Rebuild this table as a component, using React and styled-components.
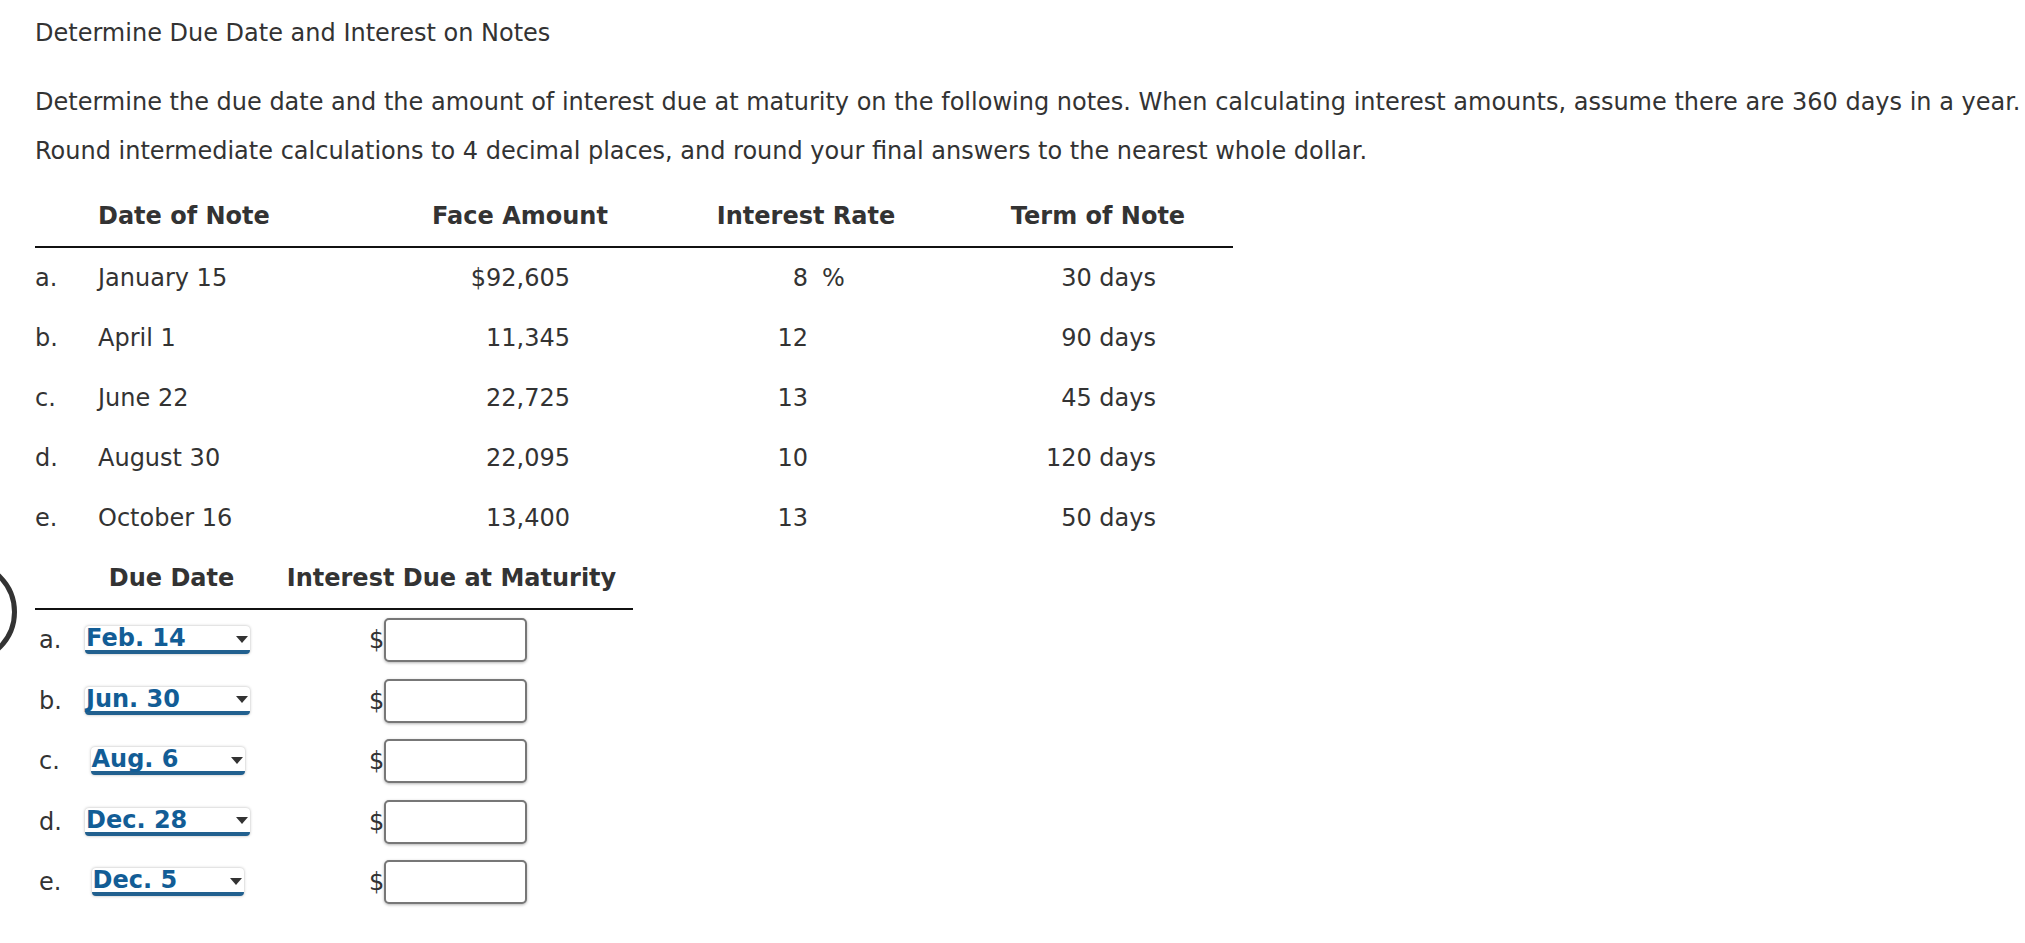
import React from "react";
import styled, { createGlobalStyle } from "styled-components";

const GlobalStyle = createGlobalStyle`
  html, body {
    margin: 0;
    padding: 0;
    background: #fff;
    overflow: hidden;
  }
  body {
    font-family: "DejaVu Sans", Verdana, sans-serif;
    color: #333;
  }
`;

const Page = styled.div`
  position: relative;
  width: 2025px;
  height: 943px;
  padding: 9px 0 0 35px;
  box-sizing: border-box;
  font-size: 24px;
  overflow: hidden;
`;

const Title = styled.div`
  line-height: 48px;
`;

const Instructions = styled.div`
  margin-top: 21px;
  line-height: 49px;
  white-space: nowrap;
`;

const Table = styled.div`
  width: ${(p) => p.$width}px;
  margin-top: ${(p) => p.$top || 0}px;
`;

const Row = styled.div`
  display: grid;
  grid-template-columns: ${(p) => p.$cols};
  align-items: center;
  height: ${(p) => p.$height || 60}px;
  border-bottom: ${(p) => (p.$head ? "2px solid #111" : "none")};
  white-space: nowrap;
`;

const HeadCell = styled.div`
  font-weight: bold;
  text-align: ${(p) => p.$align || "center"};
  padding-right: ${(p) => p.$pr || 0}px;
`;

const Cell = styled.div`
  text-align: ${(p) => p.$align || "left"};
  padding-left: ${(p) => p.$pl || 0}px;
  padding-right: ${(p) => p.$pr || 0}px;
`;

const RateCell = styled.div`
  display: flex;
  align-items: center;
`;

const RateNumber = styled.span`
  width: 188px;
  text-align: right;
`;

const Percent = styled.span`
  margin-left: 14px;
`;

const SelectCell = styled.div`
  display: flex;
  justify-content: center;
  padding-right: 20px;
`;

const FakeSelect = styled.div`
  box-sizing: border-box;
  width: ${(p) => p.$width}px;
  height: 28px;
  display: flex;
  align-items: center;
  justify-content: space-between;
  padding: 0 2px 0 1px;
  background: #fff;
  border-radius: 4px;
  border-bottom: 4px solid #21608f;
  box-shadow: 0 0 3px rgba(0, 0, 0, 0.3);
  color: #125d96;
  font-weight: bold;
  font-size: 24px;
  line-height: 24px;
`;

const Arrow = styled.span`
  width: 0;
  height: 0;
  border-left: 6px solid transparent;
  border-right: 6px solid transparent;
  border-top: 7px solid #333;
  margin-top: 2px;
`;

const AmountCell = styled.div`
  display: flex;
  align-items: center;
  padding-left: 99px;
`;

const Dollar = styled.span`
  line-height: 24px;
`;

const AmountInput = styled.div`
  box-sizing: border-box;
  width: 143px;
  height: 44px;
  border: 2px solid #777;
  border-radius: 5px;
  background: #fff;
  box-shadow: 0 1px 3px rgba(0, 0, 0, 0.3);
`;

const EdgeRing = styled.div`
  position: absolute;
  left: -87px;
  top: 560px;
  width: 104px;
  height: 104px;
  box-sizing: border-box;
  border: 5px solid #333;
  border-radius: 50%;
`;

const notes = [
  { id: "a.", date: "January 15", face: "$92,605", rate: "8", pct: true, term: "30 days" },
  { id: "b.", date: "April 1", face: "11,345", rate: "12", term: "90 days" },
  { id: "c.", date: "June 22", face: "22,725", rate: "13", term: "45 days" },
  { id: "d.", date: "August 30", face: "22,095", rate: "10", term: "120 days" },
  { id: "e.", date: "October 16", face: "13,400", rate: "13", term: "50 days" },
];

const answers = [
  { id: "a.", due: "Feb. 14", width: 168 },
  { id: "b.", due: "Jun. 30", width: 168 },
  { id: "c.", due: "Aug. 6", width: 154 },
  { id: "d.", due: "Dec. 28", width: 168 },
  { id: "e.", due: "Dec. 5", width: 152 },
];

const notesCols = "63px 322px 200px 372px 212px 29px";
const answerCols = "50px 185px 363px";

export default function App() {
  return (
    <Page>
      <GlobalStyle />
      <EdgeRing />
      <Title>Determine Due Date and Interest on Notes</Title>
      <Instructions>
        Determine the due date and the amount of interest due at maturity on the following notes. When
        calculating interest amounts, assume there are 360 days in a year.
        <br />
        Round intermediate calculations to 4 decimal places, and round your final answers to the nearest
        whole dollar.
      </Instructions>

      <Table $width={1198} $top={10}>
        <Row $cols={notesCols} $head>
          <div />
          <HeadCell $align="left">Date of Note</HeadCell>
          <HeadCell>Face Amount</HeadCell>
          <HeadCell>Interest Rate</HeadCell>
          <HeadCell>Term of Note</HeadCell>
          <div />
        </Row>
        {notes.map((n) => (
          <Row key={n.id} $cols={notesCols}>
            <Cell>{n.id}</Cell>
            <Cell>{n.date}</Cell>
            <Cell $align="right" $pr={50}>
              {n.face}
            </Cell>
            <RateCell>
              <RateNumber>{n.rate}</RateNumber>
              {n.pct && <Percent>%</Percent>}
            </RateCell>
            <Cell $align="right" $pr={48}>
              {n.term}
            </Cell>
            <div />
          </Row>
        ))}
      </Table>

      <Table $width={598}>
        <Row $cols={answerCols} $head>
          <div />
          <HeadCell $pr={12}>Due Date</HeadCell>
          <HeadCell>Interest Due at Maturity</HeadCell>
        </Row>
        {answers.map((a) => (
          <Row key={a.id} $cols={answerCols} $height={60.5}>
            <Cell $pl={4}>{a.id}</Cell>
            <SelectCell>
              <FakeSelect $width={a.width}>
                <span>{a.due}</span>
                <Arrow />
              </FakeSelect>
            </SelectCell>
            <AmountCell>
              <Dollar>$</Dollar>
              <AmountInput />
            </AmountCell>
          </Row>
        ))}
      </Table>
    </Page>
  );
}
